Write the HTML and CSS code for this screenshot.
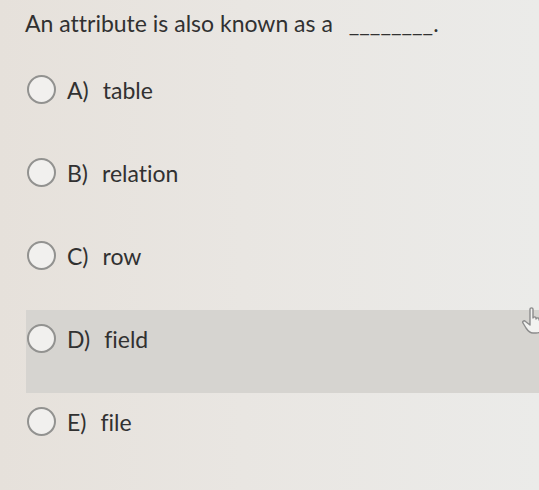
FILE: index.html
```html
<!DOCTYPE html>
<html>
<head>
<meta charset="utf-8">
<link rel="stylesheet" href="styles.css">
</head>
<body>
<div class="page">
  <p class="question">An attribute is also known as a <span class="blank">________.</span></p>
  <ul class="options">
    <li class="option"><span class="radio"></span><span class="letter">A)</span><span class="text">table</span></li>
    <li class="option"><span class="radio"></span><span class="letter">B)</span><span class="text">relation</span></li>
    <li class="option"><span class="radio"></span><span class="letter">C)</span><span class="text">row</span></li>
    <li class="option hover"><span class="radio"></span><span class="letter">D)</span><span class="text">field</span>
      <svg class="cursor" width="28" height="30" viewBox="0 0 28 30">
        <path d="M9 3 C9 1.5 12 1.5 12 3 L12 12 C12 10.5 15 10.5 15 12 L15 13 C15 11.5 18 11.5 18 13 L18 14 C18 12.5 21 12.5 21 14 L21 21 C21 25 19 27 15 27 L12 27 C9 27 7 25 5 22 L2 17 C1 15.5 3 14 4.5 15.5 L9 19 Z" fill="#f2f2f0" stroke="#8c8c8c" stroke-width="1.4" stroke-linejoin="round"/>
      </svg>
    </li>
    <li class="option"><span class="radio"></span><span class="letter">E)</span><span class="text">file</span></li>
  </ul>
</div>
</body>
</html>
```
FILE: styles.css
```css
html, body {
  margin: 0;
  padding: 0;
}
body {
  width: 539px;
  height: 490px;
  overflow: hidden;
  background: linear-gradient(90deg, #e6e1db 0%, #e9e6e2 45%, #ebebe9 100%);
  font-family: Lato, "Open Sans", sans-serif;
  font-variant-ligatures: none;
  color: #313131;
}
.page {
  padding: 7px 0 0 25px;
}
.question {
  margin: 0;
  font-size: 23px;
  line-height: 32px;
}
.blank {
  margin-left: 10px;
}
.options {
  list-style: none;
  margin: 22px 0 0 1px;
  padding: 0;
}
.option {
  position: relative;
  display: flex;
  align-items: center;
  height: 83px;
  box-sizing: border-box;
  padding: 0 0 26px 1px;
  font-size: 23px;
}
.option.hover {
  background: #d6d4d0;
}
.radio {
  width: 25px;
  height: 25px;
  border: 2px solid #929290;
  border-radius: 50%;
  background: #f1f0ee;
  flex: none;
}
.letter {
  margin-left: 11px;
}
.text {
  margin-left: 14px;
}
.cursor {
  position: absolute;
  left: 495px;
  top: -4px;
}
```
